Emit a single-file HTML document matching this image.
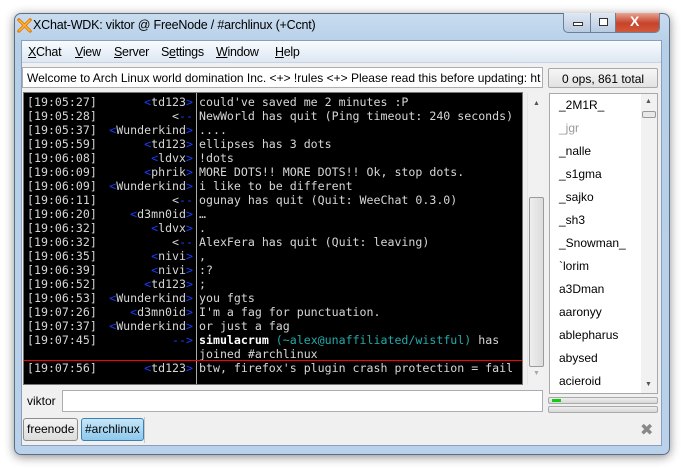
<!DOCTYPE html>
<html><head><style>
*{margin:0;padding:0;box-sizing:border-box}
body{width:687px;height:469px;background:#fff;position:relative;overflow:hidden;font-family:"Liberation Sans","DejaVu Sans",sans-serif;font-size:12px}
.win{position:absolute;left:14px;top:13px;width:656px;height:442px;border:1px solid #5a6f86;border-radius:7px;background:linear-gradient(#c9dcef,#b6cfe8 30px,#b9d1ea);box-shadow:0 2px 10px rgba(0,0,0,.45)}
.title{position:absolute;left:33px;top:18px;font-size:12.5px;color:#000;letter-spacing:-0.2px}
.client{position:absolute;left:21px;top:40px;width:641px;height:406px;background:#f0f0f0;border:1px solid #8ba0b8}
.menu{position:absolute;left:22px;top:41px;width:639px;height:22px;background:linear-gradient(#f8fbfe,#dde7f3);border-bottom:1px solid #c9d4e2}
.menu span{position:absolute;top:4px;font-size:12.5px;letter-spacing:-0.3px}
.topic{position:absolute;left:22px;top:67px;width:521px;height:21px;background:#fff;border:1px solid #abadb3;padding:3px 4px;font-size:12px;white-space:nowrap;overflow:hidden}
.ops{position:absolute;left:548px;top:68px;width:110px;height:20px;border:1px solid #a8a8a8;border-radius:2px;background:linear-gradient(#f6f6f6,#e2e2e2);text-align:center;padding-top:3px;font-size:12px}
.chat{position:absolute;left:23px;top:92px;width:500px;height:293px;background:#000;border:1px solid #777;font-family:"DejaVu Sans Mono","Liberation Mono",monospace;font-size:11.6px;color:#d6d6d6}
.sep{position:absolute;left:172px;top:0;width:1px;height:100%;background:#aaa}
.ln{position:absolute;left:0;height:14px;line-height:14px;white-space:pre}
.ts{position:absolute;left:3px}
.nk{position:absolute;right:331px;text-align:right}
.tx{position:absolute;left:175px}
.b{color:#1a3cff}
.sb{position:absolute;left:527px;top:93px;width:17px;height:292px;background:#f1f1f1;border-left:1px solid #e6e6e6}
.thumb{position:absolute;left:1px;top:104px;width:15px;height:170px;border:1px solid #9a9a9a;border-radius:2px;background:linear-gradient(90deg,#eee,#dcdcdc)}
.ul{position:absolute;left:549px;top:93px;width:109px;height:301px;background:#fff;border:1px solid #a8a8a8}
.ul div{position:absolute;left:9px;font-size:12px}
.usb{position:absolute;right:0;top:0;width:16px;height:100%;background:#f1f1f1}
.entry{position:absolute;left:62px;top:390px;width:481px;height:22px;background:#fff;border:1px solid #abadb3}
.bar{position:absolute;left:548px;width:110px;height:7px;border:1px solid #aaa;border-radius:2px;background:linear-gradient(#eee,#d8d8d8)}
.tab{position:absolute;top:418px;height:23px;border:1px solid #8c8c8c;border-radius:3px;padding:3px 3px;font-size:12px}
</style></head><body>
<div class="win"></div>
<svg style="position:absolute;left:17px;top:18px" width="15" height="15" viewBox="0 0 16 16"><path d="M2 2L14 14M14 2L2 14" stroke="#e57a00" stroke-width="3.5" stroke-linecap="round"/><path d="M2 2L14 14M14 2L2 14" stroke="#ffb63a" stroke-width="1.5"/></svg>
<div class="title">XChat-WDK: viktor @ FreeNode / #archlinux (+Ccnt)</div>
<div style="position:absolute;left:563px;top:13px;width:97px;height:20px;border:1px solid #6d7f96;border-top:none;border-radius:0 0 5px 5px;background:linear-gradient(#dfe8f3,#b9cbe0);overflow:hidden">
<div style="position:absolute;left:0;top:0;width:27px;height:20px;border-right:1px solid #6d7f96"></div>
<div style="position:absolute;left:9px;top:9px;width:10px;height:4px;border:1px solid #333;background:#fff"></div>
<div style="position:absolute;left:27px;top:0;width:25px;height:20px;border-right:1px solid #6d7f96"></div>
<div style="position:absolute;left:35px;top:5px;width:9px;height:8px;border:1px solid #333;background:#fff"></div>
<div style="position:absolute;left:52px;top:0;width:45px;height:20px;background:linear-gradient(#e8a593,#c7432a 50%,#d25b3c)"></div>
<div style="position:absolute;left:66px;top:0px;color:#fff;font-weight:bold;font-size:14px">X</div>
</div>
<div class="client"></div>
<div class="menu">
<span style="left:6px"><u>X</u>Chat</span><span style="left:53px"><u>V</u>iew</span><span style="left:92px"><u>S</u>erver</span><span style="left:139px">S<u>e</u>ttings</span><span style="left:194px"><u>W</u>indow</span><span style="left:253px"><u>H</u>elp</span>
</div>
<div class="topic">Welcome to Arch Linux world domination Inc. &lt;+&gt; !rules &lt;+&gt; Please read this before updating: ht</div>
<div class="ops">0 ops, 861 total</div>
<div class="chat"><div class="sep"></div>
<div class="ln" style="top:2px;width:500px"><span class="ts">[19:05:27]</span><span class="nk"><span class="b">&lt;</span>td123<span class="b">&gt;</span></span><span class="tx">could've saved me 2 minutes :P</span></div>
<div class="ln" style="top:16px;width:500px"><span class="ts">[19:05:28]</span><span class="nk">&lt;<span class="b">--</span></span><span class="tx">NewWorld has quit (Ping timeout: 240 seconds)</span></div>
<div class="ln" style="top:30px;width:500px"><span class="ts">[19:05:37]</span><span class="nk"><span class="b">&lt;</span>Wunderkind<span class="b">&gt;</span></span><span class="tx">....</span></div>
<div class="ln" style="top:44px;width:500px"><span class="ts">[19:05:59]</span><span class="nk"><span class="b">&lt;</span>td123<span class="b">&gt;</span></span><span class="tx">ellipses has 3 dots</span></div>
<div class="ln" style="top:58px;width:500px"><span class="ts">[19:06:08]</span><span class="nk"><span class="b">&lt;</span>ldvx<span class="b">&gt;</span></span><span class="tx">!dots</span></div>
<div class="ln" style="top:72px;width:500px"><span class="ts">[19:06:09]</span><span class="nk"><span class="b">&lt;</span>phrik<span class="b">&gt;</span></span><span class="tx">MORE DOTS!! MORE DOTS!! Ok, stop dots.</span></div>
<div class="ln" style="top:86px;width:500px"><span class="ts">[19:06:09]</span><span class="nk"><span class="b">&lt;</span>Wunderkind<span class="b">&gt;</span></span><span class="tx">i like to be different</span></div>
<div class="ln" style="top:100px;width:500px"><span class="ts">[19:06:11]</span><span class="nk">&lt;<span class="b">--</span></span><span class="tx">ogunay has quit (Quit: WeeChat 0.3.0)</span></div>
<div class="ln" style="top:114px;width:500px"><span class="ts">[19:06:20]</span><span class="nk"><span class="b">&lt;</span>d3mn0id<span class="b">&gt;</span></span><span class="tx">…</span></div>
<div class="ln" style="top:128px;width:500px"><span class="ts">[19:06:32]</span><span class="nk"><span class="b">&lt;</span>ldvx<span class="b">&gt;</span></span><span class="tx">.</span></div>
<div class="ln" style="top:142px;width:500px"><span class="ts">[19:06:32]</span><span class="nk">&lt;<span class="b">--</span></span><span class="tx">AlexFera has quit (Quit: leaving)</span></div>
<div class="ln" style="top:156px;width:500px"><span class="ts">[19:06:35]</span><span class="nk"><span class="b">&lt;</span>nivi<span class="b">&gt;</span></span><span class="tx">,</span></div>
<div class="ln" style="top:170px;width:500px"><span class="ts">[19:06:39]</span><span class="nk"><span class="b">&lt;</span>nivi<span class="b">&gt;</span></span><span class="tx">:?</span></div>
<div class="ln" style="top:184px;width:500px"><span class="ts">[19:06:52]</span><span class="nk"><span class="b">&lt;</span>td123<span class="b">&gt;</span></span><span class="tx">;</span></div>
<div class="ln" style="top:198px;width:500px"><span class="ts">[19:06:53]</span><span class="nk"><span class="b">&lt;</span>Wunderkind<span class="b">&gt;</span></span><span class="tx">you fgts</span></div>
<div class="ln" style="top:212px;width:500px"><span class="ts">[19:07:26]</span><span class="nk"><span class="b">&lt;</span>d3mn0id<span class="b">&gt;</span></span><span class="tx">I'm a fag for punctuation.</span></div>
<div class="ln" style="top:226px;width:500px"><span class="ts">[19:07:37]</span><span class="nk"><span class="b">&lt;</span>Wunderkind<span class="b">&gt;</span></span><span class="tx">or just a fag</span></div>
<div class="ln" style="top:240px;width:500px"><span class="ts">[19:07:45]</span><span class="nk"><span class="b">--&gt;</span></span><span class="tx"><b style="color:#fff">simulacrum</b> <span style="color:#2aa">(~alex@unaffiliated/wistful)</span> has</span></div>
<div class="ln" style="top:254px;width:500px"><span class="tx">joined #archlinux</span></div>
<div class="ln" style="top:268px;width:500px"><span class="ts">[19:07:56]</span><span class="nk"><span class="b">&lt;</span>td123<span class="b">&gt;</span></span><span class="tx">btw, firefox's plugin crash protection = fail</span></div>
<div style="position:absolute;left:0;top:267px;width:498px;height:1px;background:#f00;z-index:5"></div>
</div>
<div class="sb"><div style="position:absolute;left:5px;top:7px;font-size:7px;color:#555">▲</div><div class="thumb"></div><div style="position:absolute;left:5px;top:277px;font-size:7px;color:#aaa">▼</div></div>
<div class="ul">
<div style="top:4px">_2M1R_</div><div style="top:27px;color:#999">_jgr</div><div style="top:50px">_nalle</div><div style="top:73px">_s1gma</div><div style="top:96px">_sajko</div><div style="top:119px">_sh3</div><div style="top:142px">_Snowman_</div><div style="top:165px">`lorim</div><div style="top:188px">a3Dman</div><div style="top:211px">aaronyy</div><div style="top:234px">ablepharus</div><div style="top:257px">abysed</div><div style="top:280px">acieroid</div>
<div class="usb" style="left:auto"><div style="position:absolute;left:4px;top:4px;font-size:7px;color:#555">▲</div><div style="position:absolute;left:1px;top:17px;width:14px;height:7px;border:1px solid #999;border-radius:2px;background:#e8e8e8"></div><div style="position:absolute;left:4px;top:287px;font-size:7px;color:#555">▼</div></div>
</div>
<div style="position:absolute;left:27px;top:394px;font-size:12px">viktor</div>
<div class="entry"></div>
<div class="bar" style="top:397px"><div style="position:absolute;left:3px;top:1px;width:9px;height:3px;background:#1c1"></div></div>
<div class="bar" style="top:406px"></div>
<div class="tab" style="left:23px;background:linear-gradient(#f4f4f4,#dcdcdc)">freenode</div>
<div class="tab" style="left:81px;background:linear-gradient(#c6e6f8,#8ec8ec);border-color:#3c7fb1">#archlinux</div>
<div style="position:absolute;left:144px;top:417px;width:1px;height:26px;background:#c8c8c8"></div>
<div style="position:absolute;left:640px;top:420px;font-size:16px;font-weight:bold;color:#888">✖</div>
</body></html>
